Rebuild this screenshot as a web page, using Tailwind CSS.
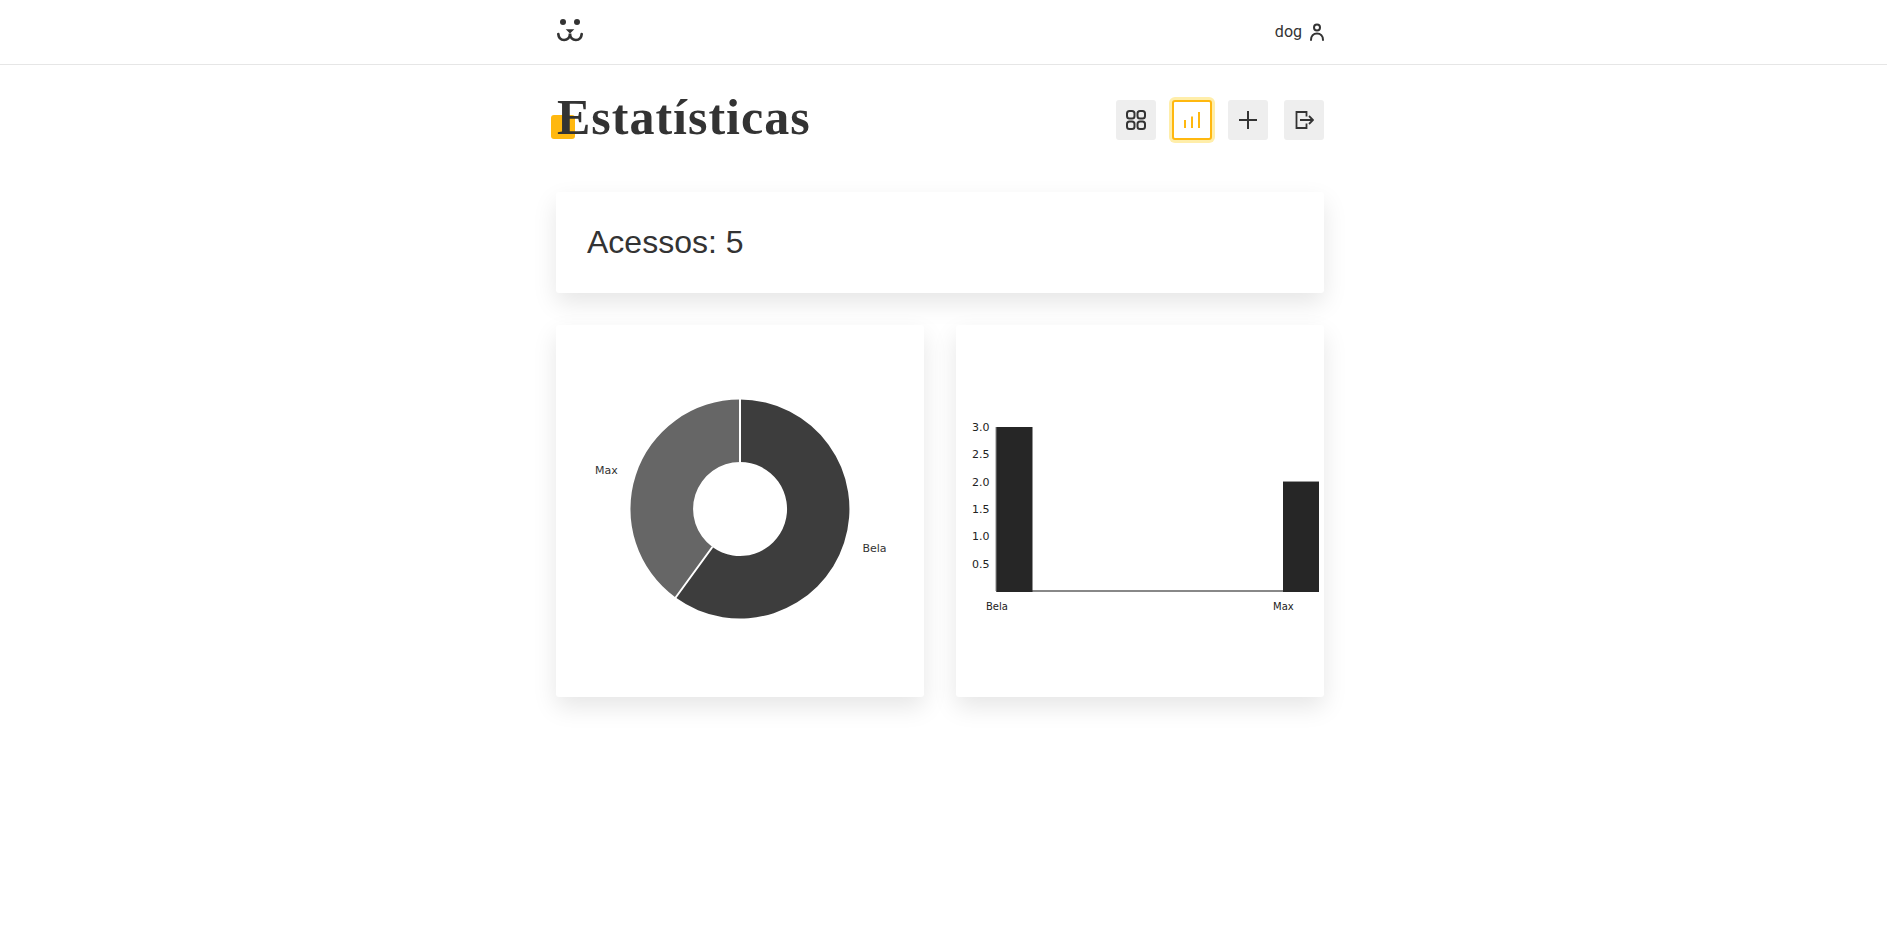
<!DOCTYPE html>
<html lang="en">
<head>
  <meta charset="UTF-8">
  <title>Estatísticas</title>
  <script src="https://cdn.jsdelivr.net/npm/@tailwindcss/browser@4"></script>
</head>
<body class="bg-white text-[#333] font-['Liberation_Sans',sans-serif] min-h-screen">
  <header class="h-[65px] border-b border-[#e6e6e6]">
    <div class="w-[768px] ml-[556px] h-full flex items-center justify-between">
      <svg class="w-[28px] h-[26px] mb-[5px]" viewBox="0 0 28 26" fill="none" stroke="#333" stroke-width="2.700" stroke-linecap="round">
        <circle cx="7" cy="5" r="3" fill="#333" stroke="none"/>
        <circle cx="21" cy="5" r="3" fill="#333" stroke="none"/>
        <path d="M2.300 17c.3 3.800 2.700 6 5.800 6 3.200 0 5.900-2.300 5.900-6.500 0 4.200 2.700 6.500 5.900 6.500 3.100 0 5.500-2.200 5.800-6"/>
        <path d="M11.500 13h5l-2.500 2.500z" fill="#333" stroke-width="1.500"/>
      </svg>
      <div class="flex items-center gap-[7px] text-base font-['Roboto',sans-serif] -mr-[1px]">
        <span>dog</span>
        <svg class="w-[16px] h-[18px]" viewBox="0 0 16 18" fill="none" stroke="#333" stroke-width="2" stroke-linecap="round">
          <circle cx="8" cy="4.500" r="3"/>
          <path d="M2 17c0-4 2.500-6.500 6-6.500s6 2.500 6 6.500"/>
        </svg>
      </div>
    </div>
  </header>

  <main class="w-[768px] ml-[556px] pb-16">
    <div class="flex items-start justify-between pt-[35px] h-[127px]">
      <h1 class="relative font-['Liberation_Serif',serif] font-bold text-[50px] leading-[32px] tracking-[1px] mt-[1px] pl-[1px]">
        <span class="absolute left-[-5px] top-[14px] w-[24px] h-[24px] rounded-[3px] bg-[#ffb80f]"></span>
        <span class="relative">Estatísticas</span>
      </h1>
      <div class="flex gap-4">
        <button class="w-10 h-10 rounded-[3px] bg-[#eee] flex items-center justify-center">
          <svg class="w-5 h-5" viewBox="0 0 20 20" fill="none" stroke="#333" stroke-width="2">
            <rect x="1" y="1" width="7.500" height="7.500" rx="2.500"/>
            <rect x="11.500" y="1" width="7.500" height="7.500" rx="2.500"/>
            <rect x="1" y="11.500" width="7.500" height="7.500" rx="2.500"/>
            <rect x="11.500" y="11.500" width="7.500" height="7.500" rx="2.500"/>
          </svg>
        </button>
        <button class="w-10 h-10 rounded-[3px] bg-white border-2 border-[#ffb80f] ring-[3px] ring-[#ffeeaa] flex items-center justify-center">
          <svg class="w-5 h-5" viewBox="0 0 20 20" fill="none" stroke="#ffb80f" stroke-width="2">
            <path d="M3 18v-8M10 18v-11.500M17 18v-16"/>
          </svg>
        </button>
        <button class="w-10 h-10 rounded-[3px] bg-[#eee] flex items-center justify-center">
          <svg class="w-5 h-5" viewBox="0 0 20 20" fill="none" stroke="#333" stroke-width="2">
            <path d="M10 1v18M1 10h18"/>
          </svg>
        </button>
        <button class="w-10 h-10 rounded-[3px] bg-[#eee] flex items-center justify-center">
          <svg class="w-5 h-5" viewBox="0 0 20 20" fill="none" stroke="#333" stroke-width="1.800">
            <path d="M12.500 6.500v-4.500H2.500v16h10v-4.500M6 10h13M15 6l4 4-4 4"/>
          </svg>
        </button>
      </div>
    </div>

    <section class="bg-white rounded-[3px] shadow-[0_10px_25px_rgba(0,0,0,0.1)] py-8 pl-[31px] text-[32px] leading-[37px] h-[101px]">Acessos: 5</section>

    <div class="grid grid-cols-2 gap-8 mt-8">
      <section class="bg-white rounded-[3px] shadow-[0_10px_25px_rgba(0,0,0,0.1)] h-[372px]">
        <svg class="block" width="368" height="372" viewBox="0 0 368 372" font-family="DejaVu Sans, sans-serif" font-size="11">
          <path d="M184 74.500A109.500 109.500 0 1 1 119.600 272.600L156.400 222A47 47 0 1 0 184 137z" fill="#3d3d3d"/>
          <path d="M184 74.500A109.500 109.500 0 0 0 119.600 272.600L156.400 222A47 47 0 0 1 184 137z" fill="#666"/>
          <path d="M184 73v64M156.400 222l-37.100 51" stroke="#fff" stroke-width="2" fill="none"/>
          <text x="39" y="149" fill="#333">Max</text>
          <text x="306.500" y="227" fill="#333">Bela</text>
        </svg>
      </section>
      <section class="bg-white rounded-[3px] shadow-[0_10px_25px_rgba(0,0,0,0.1)] h-[372px]">
        <svg class="block" width="368" height="372" viewBox="0 0 368 372" font-family="DejaVu Sans, sans-serif" font-size="11" fill="#222">
          <path d="M40.500 102v164M40 266h288" stroke="#888" stroke-width="2" fill="none"/>
          <rect x="40.500" y="102" width="36" height="165" fill="#262626"/>
          <rect x="327" y="157" width="36" height="110" fill="#262626"/>
          <path d="M327 156.500h36" stroke="#999" stroke-width="1" fill="none"/>
          <text x="16" y="106">3.0</text>
          <text x="16" y="133">2.5</text>
          <text x="16" y="161">2.0</text>
          <text x="16" y="188">1.5</text>
          <text x="16" y="215">1.0</text>
          <text x="16" y="243">0.5</text>
          <text x="30" y="285" font-size="10">Bela</text>
          <text x="317" y="285" font-size="10">Max</text>
        </svg>
      </section>
    </div>
  </main>
</body>
</html>
